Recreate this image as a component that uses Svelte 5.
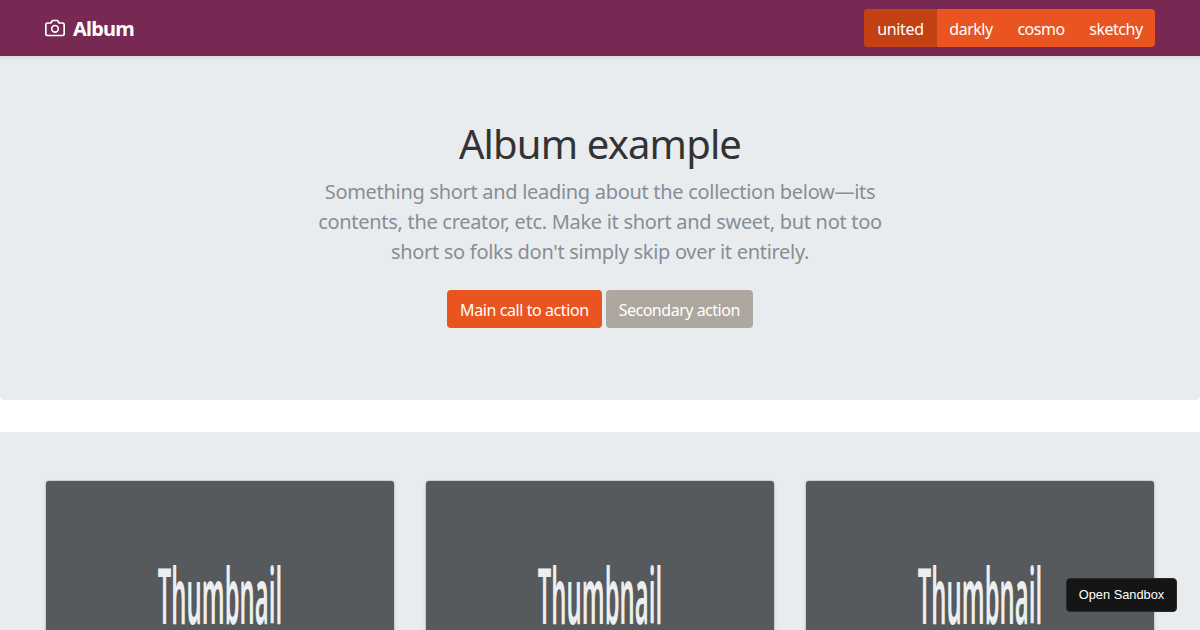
<script>
  const themes = ['united', 'darkly', 'cosmo', 'sketchy'];
  const cards = [1, 2, 3];
</script>

<div class="page">
  <header class="navbar">
    <div class="brand">
      <svg class="cam" width="20" height="20" viewBox="0 0 24 24" fill="none" stroke="currentColor" stroke-width="2" stroke-linecap="round" stroke-linejoin="round"><path d="M23 19a2 2 0 0 1-2 2H3a2 2 0 0 1-2-2V8a2 2 0 0 1 2-2h4l2-3h6l2 3h4a2 2 0 0 1 2 2z"/><circle cx="12" cy="13" r="4"/></svg>
      <strong>Album</strong>
    </div>
    <div class="group">
      {#each themes as t, i}
        <span class="tbtn" class:active={i === 0}>{t}</span>
      {/each}
    </div>
  </header>

  <section class="hero">
    <h1>Album example</h1>
    <p>Something short and leading about the collection below—its contents, the creator, etc. Make it short and sweet, but not too short so folks don't simply skip over it entirely.</p>
    <div class="actions">
      <span class="btn primary">Main call to action</span>
      <span class="btn secondary">Secondary action</span>
    </div>
  </section>

  <section class="album">
    <div class="grid">
      {#each cards as c}
        <div class="card">
          <svg class="thumb" width="348" height="225" viewBox="0 0 348 225">
            <rect width="348" height="225" fill="#565a5c" />
            <text transform="translate(174 143) scale(0.745 2.45)" text-anchor="middle" class="ttext">Thumbnail</text>
          </svg>
        </div>
      {/each}
    </div>
  </section>

  <div class="sandbox">Open Sandbox</div>
</div>

<style>
  :global(body) {
    margin: 0;
    background: #fff;
  }
  .page {
    position: relative;
    height: 630px;
    overflow: hidden;
    font-family: "Noto Sans", sans-serif;
    font-size: 16px;
    line-height: 1.5;
    color: #333;
  }
  .navbar {
    position: relative;
    z-index: 2;
    box-sizing: border-box;
    height: 56px;
    padding: 0 45px;
    display: flex;
    align-items: center;
    justify-content: space-between;
    background: #772953;
    box-shadow: 0 2px 4px rgba(0, 0, 0, 0.075);
    color: #fff;
  }
  .brand {
    display: flex;
    align-items: center;
    font-size: 20px;
  }
  .cam {
    margin-right: 8px;
  }
  .brand strong {
    font-weight: 700;
    letter-spacing: -0.8px;
    line-height: 32px;
    padding-top: 2px;
  }
  .group {
    display: flex;
    height: 38px;
    border-radius: 4px;
    overflow: hidden;
    background: #e95420;
  }
  .tbtn {
    padding: 0 12.4px;
    line-height: 40px;
    color: #fff;
    letter-spacing: -0.5px;
  }
  .tbtn.active {
    background: #c34113;
    padding: 0 13.2px 0 12.8px;
    letter-spacing: -0.33px;
  }
  .hero {
    box-sizing: border-box;
    height: 344px;
    margin-bottom: 32px;
    padding-top: 64px;
    background: #e9ecef;
    border-radius: 0 0 4px 4px;
    text-align: center;
  }
  h1 {
    margin: 0 0 9px;
    font-size: 40px;
    font-weight: 400;
    line-height: 48px;
    letter-spacing: -0.85px;
  }
  p {
    width: 570px;
    margin: 0 auto 23px;
    font-size: 20px;
    line-height: 30px;
    font-weight: 400;
    color: #868e96;
    letter-spacing: -0.3px;
  }
  .actions {
    display: flex;
    justify-content: center;
    gap: 4px;
  }
  .btn {
    box-sizing: border-box;
    height: 38px;
    padding: 0 13px;
    line-height: 40px;
    border-radius: 4px;
    color: #fff;
    letter-spacing: -0.42px;
  }
  .primary {
    background: #e95420;
  }
  .secondary {
    background: #aea79f;
    letter-spacing: -0.48px;
  }
  .album {
    height: 198px;
    padding: 48px 45px 0;
    background: #e9ecef;
  }
  .grid {
    display: grid;
    grid-template-columns: repeat(3, 350px);
    column-gap: 30px;
  }
  .card {
    border: 1px solid rgba(0, 0, 0, 0.125);
    border-radius: 4px;
    overflow: hidden;
    box-shadow: 0 2px 4px rgba(0, 0, 0, 0.075);
  }
  .thumb {
    display: block;
  }
  .ttext {
    font-family: "Noto Sans", sans-serif;
    font-size: 32px;
    font-weight: 600;
    fill: #eceeef;
  }
  .sandbox {
    position: absolute;
    right: 23px;
    bottom: 18px;
    width: 111px;
    height: 34px;
    box-sizing: border-box;
    border-radius: 4px;
    border: 1px solid #2a2a2a;
    background: #151515;
    color: #fff;
    font-family: "Liberation Sans", sans-serif;
    font-size: 12.8px;
    line-height: 32px;
    text-align: center;
  }
</style>
